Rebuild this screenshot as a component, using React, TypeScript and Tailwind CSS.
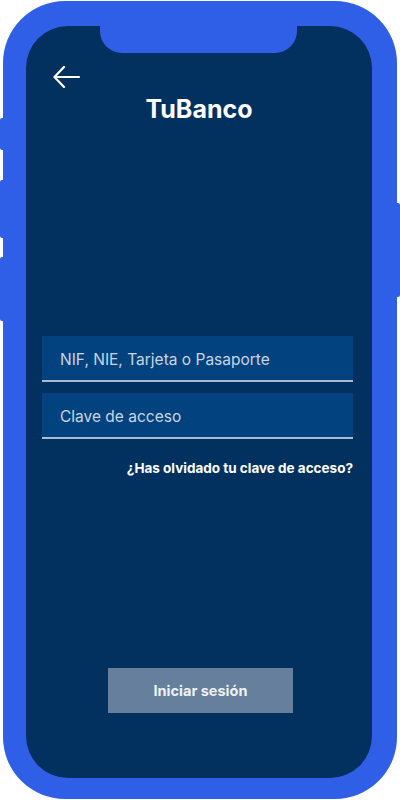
import React from "react";

function BackArrow() {
  return (
    <svg width="28" height="22" viewBox="0 0 28 22" fill="none" stroke="white" strokeWidth="2.2" strokeLinecap="round" strokeLinejoin="round">
      <path d="M26 11H2" />
      <path d="M11 1L1.5 11l9.5 10" />
    </svg>
  );
}

export default function App() {
  return (
    <div className="relative w-[400px] h-[800px] bg-white overflow-hidden" style={{ fontFamily: "Inter, 'Noto Sans', sans-serif" }}>
      {/* side buttons */}
      <div className="absolute left-0 top-[118px] w-[6px] h-[32px] bg-[#2f5fe6] rounded-l-[2px]" />
      <div className="absolute left-0 top-[180px] w-[6px] h-[58px] bg-[#2f5fe6] rounded-l-[2px]" />
      <div className="absolute left-0 top-[257px] w-[6px] h-[64px] bg-[#2f5fe6] rounded-l-[2px]" />
      <div className="absolute right-0 top-[203px] w-[6px] h-[94px] bg-[#2f5fe6] rounded-r-[2px]" />

      <div className="relative ml-[3px] mt-[1px] w-[394px] h-[798px] rounded-[62px] bg-[#2f5fe6] pl-[23px] pr-[25px] pt-[25px] pb-[21px]">
        <div className="relative h-full rounded-[42px] bg-[#03315f]">
          {/* notch */}
          <div className="absolute left-[74px] top-0 w-[197px] h-[27px] bg-[#2f5fe6] rounded-b-[22px]" />

          <div className="flex flex-col">
            <div className="ml-[27px] mt-[40px] h-[22px]">
              <BackArrow />
            </div>
            <h1 className="mt-[6px] text-center text-white font-bold text-[25px] leading-[30px]">TuBanco</h1>

            <div className="ml-[16px] mt-[212px] w-[311px] flex flex-col gap-[11px]">
              <div className="h-[46px] bg-[#02437f] border-b-2 border-[#a9bcd2] pl-[18px] pt-[3px] flex items-center text-[15.5px] text-[#c9d5e3]">
                NIF, NIE, Tarjeta o Pasaporte
              </div>
              <div className="h-[46px] bg-[#02437f] border-b-2 border-[#a9bcd2] pl-[18px] pt-[3px] flex items-center text-[15.5px] text-[#c9d5e3]">
                Clave de acceso
              </div>
            </div>
            <div className="ml-[16px] w-[311px] mt-[20px] text-right text-white font-bold text-[13.5px] leading-[18px]">
              ¿Has olvidado tu clave de acceso?
            </div>

            <div className="ml-[82px] mt-[191px] w-[185px] h-[45px] bg-[#667f9c] flex items-center justify-center text-[#eef2f6] font-bold text-[14.5px]">
              Iniciar sesión
            </div>
          </div>
        </div>
      </div>
    </div>
  );
}
